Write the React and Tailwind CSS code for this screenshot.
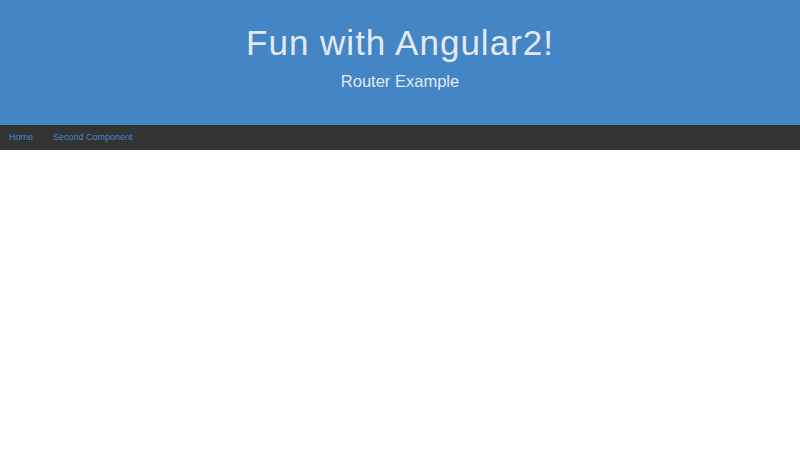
export default function App() {
  const links = ["Home", "Second Component"];

  return (
    <div className="min-h-[450px] bg-white font-['Liberation_Sans',Arial,sans-serif]">
      {/* page banner */}
      <header className="h-[125px] bg-[#4485c5] text-[#e3e9f1] flex flex-col items-center pt-[21px]">
        <h1 className="text-[35px] leading-[44px] tracking-[1px]">Fun with Angular2!</h1>
        <h2 className="text-[16.5px] leading-[22px] mt-[5px]">Router Example</h2>
      </header>

      {/* router links */}
      <nav className="h-[25px] bg-[#333333] flex items-center pl-[9px] gap-[20px]">
        {links.map((l) => (
          <a key={l} href="#" className="text-[9px] text-[#4a86c8]">
            {l}
          </a>
        ))}
      </nav>
    </div>
  );
}
